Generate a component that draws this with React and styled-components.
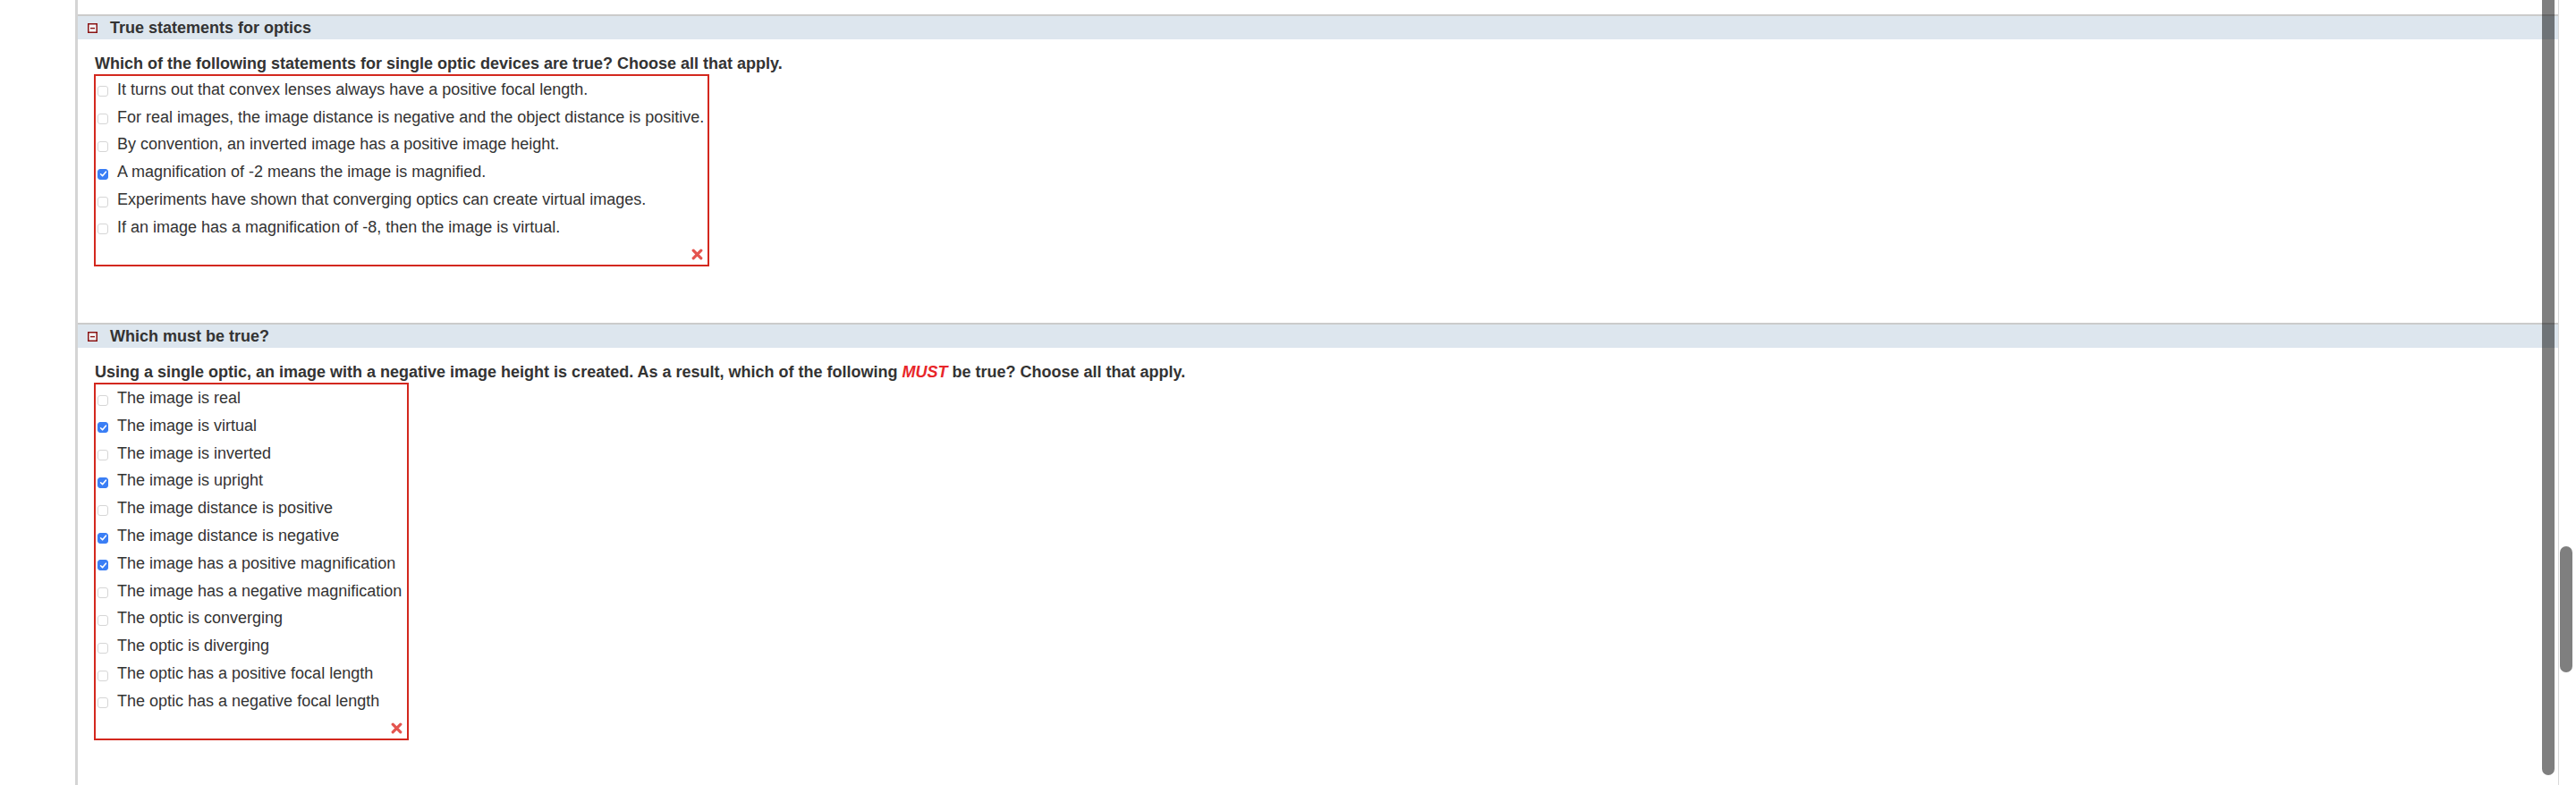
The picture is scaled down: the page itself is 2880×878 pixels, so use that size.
import React from "react";
import styled, { createGlobalStyle } from "styled-components";

const GlobalStyle = createGlobalStyle`
  html, body {
    margin: 0;
    padding: 0;
    background: #fff;
  }
  body {
    font-family: "Liberation Sans", Arial, Helvetica, sans-serif;
    color: #333;
  }
`;

const Page = styled.div`
  display: flex;
  width: 2880px;
  height: 878px;
  overflow: hidden;
  background: #fff;
`;

const SidePane = styled.div`
  width: 84px;
  flex-shrink: 0;
  border-right: 3px solid #d4d4d4;
`;

const Main = styled.main`
  position: relative;
  flex: 1;
  padding-top: 16px;
  border-right: 1px solid #d9d9d9;
  overflow: hidden;
`;

const OuterTrack = styled.div`
  position: relative;
  width: 19px;
  flex-shrink: 0;
`;

const InnerThumb = styled.div`
  position: absolute;
  top: -20px;
  right: 4px;
  width: 14px;
  height: 887px;
  border-radius: 7px;
  background: rgba(0, 0, 0, 0.5);
`;

const OuterThumb = styled.div`
  position: absolute;
  top: 611px;
  left: 1px;
  width: 14px;
  height: 141px;
  border-radius: 7px;
  background: #7f7f7f;
`;

const Section = styled.section`
  margin-bottom: 63px;
`;

const Header = styled.div`
  display: flex;
  align-items: center;
  gap: 14px;
  height: 26px;
  padding-left: 11px;
  border-top: 2px solid #cbcbcb;
  background: #dde6ee;
  font-size: 18px;
  font-weight: 700;
  color: #333;
`;

const Body = styled.div`
  padding-left: 18px;
`;

const Question = styled.div`
  margin: 17px 0 1px;
  padding-left: 1px;
  font-size: 18px;
  line-height: 21px;
  font-weight: 700;
  color: #333;
`;

const Must = styled.em`
  color: #e8262a;
  font-style: italic;
`;

const ChoiceBox = styled.div`
  box-sizing: border-box;
  width: ${(p) => p.$width}px;
  border: 2px solid #d3281e;
`;

const Row = styled.label`
  display: flex;
  align-items: center;
  height: 30.8px;
  font-size: 18px;
  line-height: 21px;
  color: #333;
`;

const Box = styled.span`
  box-sizing: border-box;
  width: 12px;
  height: 12px;
  margin: 4px 10px 0 2px;
  flex-shrink: 0;
  border-radius: 3px;
  display: flex;
  align-items: center;
  justify-content: center;
  border: 1px solid ${(p) => (p.$checked ? "#3a7ef5" : "#d6d6d6")};
  background: ${(p) => (p.$checked ? "#3a7ef5" : "#fff")};
`;

const Footer = styled.div`
  display: flex;
  justify-content: flex-end;
  align-items: flex-start;
  height: 26.4px;
  box-sizing: border-box;
  padding: 8.6px 5px 0 0;
`;

const MinusIcon = () => (
  <svg width="11" height="11" viewBox="0 0 11 11">
    <rect x="0.75" y="0.75" width="9.5" height="9.5" fill="#f4f6f8" stroke="#8a1414" strokeWidth="1.5" />
    <line x1="3" y1="5.6" x2="8" y2="5.6" stroke="#8a1414" strokeWidth="1.4" />
  </svg>
);

const CheckMark = () => (
  <svg width="9" height="9" viewBox="0 0 9 9">
    <path d="M1.6 4.8 L3.6 6.8 L7.4 2.2" fill="none" stroke="#fff" strokeWidth="1.6" strokeLinecap="round" strokeLinejoin="round" />
  </svg>
);

const WrongIcon = () => (
  <svg width="13" height="13" viewBox="0 0 13 13">
    <path d="M2.2 2.2 L10.8 10.8 M10.8 2.2 L2.2 10.8" stroke="#e4544e" strokeWidth="3.2" strokeLinecap="round" />
  </svg>
);

const questions = [
  {
    title: "True statements for optics",
    prompt: "Which of the following statements for single optic devices are true? Choose all that apply.",
    width: 688,
    choices: [
      ["It turns out that convex lenses always have a positive focal length.", false],
      ["For real images, the image distance is negative and the object distance is positive.", false],
      ["By convention, an inverted image has a positive image height.", false],
      ["A magnification of -2 means the image is magnified.", true],
      ["Experiments have shown that converging optics can create virtual images.", false],
      ["If an image has a magnification of -8, then the image is virtual.", false],
    ],
  },
  {
    title: "Which must be true?",
    prompt: (
      <>
        Using a single optic, an image with a negative image height is created. As a result, which of the following{" "}
        <Must>MUST</Must> be true? Choose all that apply.
      </>
    ),
    width: 352,
    choices: [
      ["The image is real", false],
      ["The image is virtual", true],
      ["The image is inverted", false],
      ["The image is upright", true],
      ["The image distance is positive", false],
      ["The image distance is negative", true],
      ["The image has a positive magnification", true],
      ["The image has a negative magnification", false],
      ["The optic is converging", false],
      ["The optic is diverging", false],
      ["The optic has a positive focal length", false],
      ["The optic has a negative focal length", false],
    ],
  },
];

export default function App() {
  return (
    <>
      <GlobalStyle />
      <Page>
        <SidePane />
        <Main>
          {questions.map((q) => (
            <Section key={q.title}>
              <Header>
                <MinusIcon />
                <span>{q.title}</span>
              </Header>
              <Body>
                <Question>{q.prompt}</Question>
                <ChoiceBox $width={q.width}>
                  {q.choices.map(([text, checked]) => (
                    <Row key={text}>
                      <Box $checked={checked}>{checked && <CheckMark />}</Box>
                      {text}
                    </Row>
                  ))}
                  <Footer>
                    <WrongIcon />
                  </Footer>
                </ChoiceBox>
              </Body>
            </Section>
          ))}
          <InnerThumb />
        </Main>
        <OuterTrack>
          <OuterThumb />
        </OuterTrack>
      </Page>
    </>
  );
}
